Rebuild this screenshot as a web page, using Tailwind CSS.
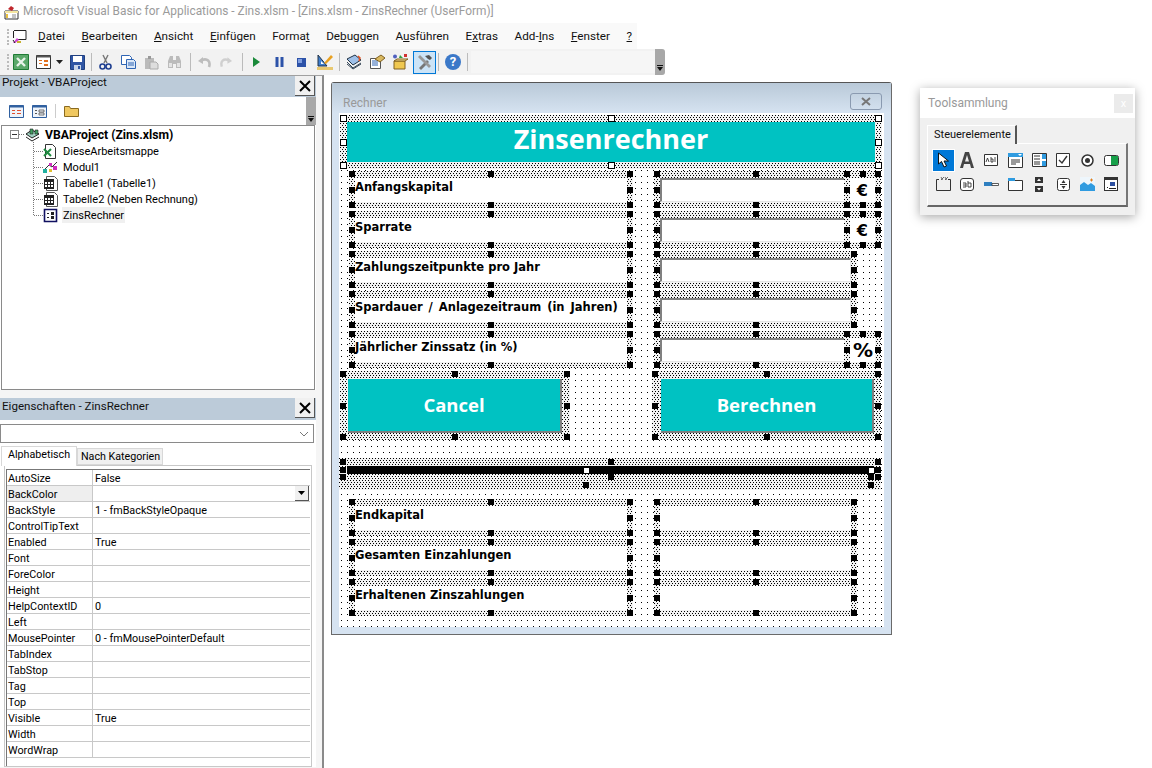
<!DOCTYPE html>
<html lang="de">
<head>
<meta charset="UTF-8">
<title>Microsoft Visual Basic for Applications - Zins.xlsm</title>
<script src="https://cdn.jsdelivr.net/npm/@tailwindcss/browser@4"></script>
</head>
<body class="bg-white overflow-hidden">
<div class="w-[1152px] h-[768px] flex flex-col overflow-hidden bg-white text-black whitespace-nowrap font-['Roboto',sans-serif]">

  <!-- title bar -->
  <div class="h-[23px] shrink-0 flex items-center pl-[4px] pt-[1px] gap-[4px] text-[11.9px] text-[#9b9b9b]">
    <svg class="w-[15px] h-[15px]" viewBox="0 0 15 15"><path d="M1 6h13v8H1z" fill="#fff" stroke="#333"/><path d="M1 6h13v2H1z" fill="#f4e5a0"/><path d="M4 4l3-3 3 2-2 3z" fill="#c0272d"/><path d="M2 9h2v4H2z" fill="#e8c040"/><path d="M8 10h4M8 12h4" stroke="#888"/></svg>
    <span>Microsoft Visual Basic for Applications - Zins.xlsm - [Zins.xlsm - ZinsRechner (UserForm)]</span>
  </div>

  <!-- menu bar -->
  <div class="h-[26px] shrink-0 w-[637px] bg-[#f9f9f9] flex items-center pl-[7px] pt-[1px] text-[11.7px] text-[#111]">
    <div class="w-[3px] h-[16px] shrink-0 border-l-2 border-dotted border-[#bbb] mr-[2px]"></div>
    <svg class="w-[15px] h-[15px] shrink-0 mr-[11px]" viewBox="0 0 15 15"><path d="M2 1.500h12v9H6" fill="#fff" stroke="#222"/><path d="M1.500 2v7" stroke="#222"/><path d="M1 14l4-5 2 2-4 3z" fill="#d040d0"/><path d="M1 11l2 3" stroke="#222"/><path d="M5 13h4" stroke="#c8b030" stroke-width="2"/></svg>
    <div class="flex gap-[16.6px]">
      <span><u>D</u>atei</span><span><u>B</u>earbeiten</span><span><u>A</u>nsicht</span><span><u>E</u>infügen</span><span>Forma<u>t</u></span><span>De<u>b</u>uggen</span><span>A<u>u</u>sführen</span><span>E<u>x</u>tras</span><span>Add-<u>I</u>ns</span><span><u>F</u>enster</span><span><u>?</u></span>
    </div>
  </div>

  <!-- standard toolbar -->
  <div class="h-[26px] shrink-0 w-[665px] bg-[#f2f2f2] flex items-center pl-[7px] rounded-r-[3px] relative">
    <div class="w-[3px] h-[16px] border-l-2 border-dotted border-[#bbb] mr-[3px]"></div>
    <svg class="w-[16px] h-[16px] mr-[7px]" viewBox="0 0 16 16"><path d="M.5.500h15v15H.5z" fill="#5aa86a" stroke="#1e7b34"/><path d="M4 4l8 8M12 4l-8 8" stroke="#e8f4ea" stroke-width="2.400"/></svg>
    <svg class="w-[15px] h-[14px]" viewBox="0 0 15 14"><path d="M.5.500h14v13H.5z" fill="#fff" stroke="#333"/><path d="M.5.500h14v2H.5z" fill="#555"/><path d="M3 5h3v1H3zM3 8h3v1H3zM8 5h4v2H8zM8 9h4v2H8z" fill="#e07020"/></svg>
    <svg class="w-[7px] h-[4px] ml-[5px] mr-[7px]" viewBox="0 0 7 4"><path d="M0 0h7L3.500 4z" fill="#222"/></svg>
    <svg class="w-[15px] h-[15px]" viewBox="0 0 15 15"><path d="M.5.500h14v14H.5z" fill="#2f55a4" stroke="#1f3f80"/><path d="M3 1h9v6H3z" fill="#fff"/><path d="M4 10h7v5H4z" fill="#c8d4e8"/><path d="M8 11h2v3H8z" fill="#2f55a4"/></svg>
    <div class="w-px h-[18px] bg-[#bbb] ml-[6px] mr-[7px]"></div>
    <svg class="w-[13px] h-[16px] mr-[9px]" viewBox="0 0 13 16"><path d="M4 1l4 8M9 1L5 9" stroke="#777" stroke-width="1.400"/><circle cx="3.500" cy="12.500" r="2.500" fill="none" stroke="#1f3f90" stroke-width="1.600"/><circle cx="9.500" cy="12.500" r="2.500" fill="none" stroke="#1f3f90" stroke-width="1.600"/></svg>
    <svg class="w-[15px] h-[14px] mr-[8px]" viewBox="0 0 15 14"><path d="M.5.500h8l2 2v7H.5z" fill="#fff" stroke="#2f65b4"/><path d="M5.500 4.500h7l2 2v7h-9z" fill="#dbe8f8" stroke="#2f65b4"/><path d="M7 8h6M7 10h6" stroke="#2f65b4"/></svg>
    <svg class="w-[15px] h-[15px] mr-[8px]" viewBox="0 0 15 15"><path d="M1 3h9v11H1z" fill="#bbb"/><path d="M4 1h3v3H4z" fill="#999"/><path d="M6 7h6l2 2v5H6z" fill="#ddd" stroke="#aaa"/></svg>
    <svg class="w-[15px] h-[14px]" viewBox="0 0 15 14"><path d="M1 6l2-5h3v4h3V1h3l2 5v7H9V9H6v4H1z" fill="#bbb"/><path d="M2 8h3v4H2zM10 8h3v4h-3z" fill="#e4e4e4"/></svg>
    <div class="w-px h-[18px] bg-[#bbb] ml-[8px] mr-[6px]"></div>
    <svg class="w-[14px] h-[14px] mr-[9px]" viewBox="0 0 14 14"><path d="M12 12c2-6-2-9-7-7" fill="none" stroke="#bdbdbd" stroke-width="2.600"/><path d="M1 6l5-4v7z" fill="#bdbdbd"/></svg>
    <svg class="w-[13px] h-[14px]" viewBox="0 0 14 14"><path d="M2 12C0 6 4 3 9 5" fill="none" stroke="#cfcfcf" stroke-width="2.600"/><path d="M13 6L8 2v7z" fill="#cfcfcf"/></svg>
    <div class="w-px h-[18px] bg-[#bbb] ml-[9px] mr-[9px]"></div>
    <svg class="w-[8px] h-[10px] mr-[15px]" viewBox="0 0 8 10"><path d="M1 0l7 5-7 5z" fill="#1a8a3a"/></svg>
    <svg class="w-[9px] h-[10px] mr-[13px]" viewBox="0 0 9 10"><path d="M.5 0h3v10h-3zM5.500 0h3v10h-3z" fill="#2c52a8"/></svg>
    <svg class="w-[9px] h-[9px] mr-[11px]" viewBox="0 0 9 9"><path d="M0 0h9v9H0z" fill="#2c52a8"/><path d="M1 1h4v4H1z" fill="#7f9ee0"/></svg>
    <svg class="w-[16px] h-[16px]" viewBox="0 0 16 16"><path d="M1 1l9 11H1z" fill="#3f7fd0" stroke="#234"/><path d="M4 7v3h3z" fill="#fff"/><path d="M7 9l7-8 2 2-7 7z" fill="#e8a020"/><path d="M0 13h16v3H0z" fill="#e8c870"/></svg>
    <div class="w-px h-[18px] bg-[#bbb] ml-[6px] mr-[6px]"></div>
    <svg class="w-[16px] h-[16px] mr-[7px]" viewBox="0 0 16 16"><path d="M1 5l8-4 6 5-8 5z" fill="#9fc0e8" stroke="#234"/><path d="M1 8l6 6 8-5M1 10l6 5 8-5" fill="none" stroke="#345"/><path d="M12 2l2 2-1 3" stroke="#e05020" stroke-width="1.500" fill="none"/></svg>
    <svg class="w-[16px] h-[16px] mr-[7px]" viewBox="0 0 16 16"><path d="M1.500 4.500h10v10h-10z" fill="#fff" stroke="#555"/><path d="M3 7h6M3 9h6M3 11h6" stroke="#2f65b4"/><path d="M6 5l6-4 4 3-5 4z" fill="#d8b860" stroke="#806020"/></svg>
    <svg class="w-[16px] h-[16px]" viewBox="0 0 16 16"><path d="M2 7h11v8H2z" fill="#f0c850" stroke="#806020"/><path d="M2 7l3-2h11l-3 2z" fill="#f8e090" stroke="#806020"/><circle cx="3" cy="2.500" r="2" fill="#5060c0"/><path d="M8 1l3 3H7z" fill="#30a040"/><path d="M12 0h3v3h-3z" fill="#d03030"/></svg>
    <div class="w-[23px] h-[23px] ml-[5px] bg-[#cce4f7] border border-[#0078d7] flex items-center justify-center">
      <svg class="w-[16px] h-[16px]" viewBox="0 0 16 16"><path d="M2 14l8-8 2 2-8 8z" fill="#777"/><path d="M3 1l11 11-2 2L1 3z" fill="#999"/><path d="M8 2l4-1 3 3-2 2-2-1z" fill="#555"/></svg>
    </div>
    <div class="w-px h-[18px] bg-[#bbb] ml-[2px] mr-[6px]"></div>
    <div class="w-[16px] h-[16px] rounded-full bg-[#3b78c8] text-white text-[13px] font-bold leading-[16px] text-center">?</div>
    <div class="w-px h-[18px] bg-[#bbb] ml-[6px] mr-[3px]"></div>
    <div class="w-[184px] h-[22px] bg-[#f6f6f6]"></div>
    <div class="w-[10px] h-[26px] bg-[#a8a8a8] rounded-r-[3px] flex items-end justify-center pb-[4px]">
      <svg class="w-[6px] h-[6px]" viewBox="0 0 6 6"><path d="M0 0h6v1H0zM0 2h6L3 6z" fill="#111"/></svg>
    </div>
  </div>

  <!-- workspace -->
  <div class="flex flex-1 min-h-0">

    <!-- docked panels -->
    <div class="w-[324px] shrink-0 border-r-2 border-[#8a8a8a] bg-[#f5f5f5] border-t border-t-[#a0a0a0] text-[11px]">
      <div class="w-[316px] flex flex-col h-[691px] bg-white">

        <div class="h-[21px] bg-[#bccbd9] flex items-start justify-between pl-[2px] pr-[1px]">
          <span class="text-[11.7px] leading-[13px] text-[#111]">Projekt - VBAProject</span>
          <div class="w-[20px] h-[20px] bg-[#f0f0f0] border-r border-b border-[#555] flex items-center justify-center">
            <svg class="w-[12px] h-[12px]" viewBox="0 0 12 12"><path d="M1 1l10 10M11 1L1 11" stroke="#000" stroke-width="2"/></svg>
          </div>
        </div>

        <div class="h-[28px] flex items-center pl-[9px] gap-[8px] relative">
          <svg class="w-[15px] h-[13px]" viewBox="0 0 15 13"><path d="M.5.500h14v12H.5z" fill="#eef3fa" stroke="#3060a0"/><path d="M.5.500h14v2H.5z" fill="#3060a0"/><path d="M3 5h3v1H3zM3 8h3v1H3zM8 5h4v1H8zM8 8h4v1H8z" fill="#e05030"/></svg>
          <svg class="w-[15px] h-[13px]" viewBox="0 0 15 13"><path d="M.5.500h14v12H.5z" fill="#eef3fa" stroke="#3060a0"/><path d="M.5.500h14v2H.5z" fill="#3060a0"/><path d="M3 5h2v1H3zM3 8h2v1H3z" fill="#555"/><path d="M7 5h5v2H7zM7 8h5v2H7z" fill="none" stroke="#555" stroke-width=".8"/></svg>
          <div class="w-px h-[14px] bg-[#ccc]"></div>
          <svg class="w-[15px] h-[12px]" viewBox="0 0 15 12"><path d="M.5 1.500h5l1 2h8v8H.5z" fill="#f0c860" stroke="#8a6a20"/></svg>
          <div class="absolute right-0 top-0 w-[10px] h-[28px] bg-[#a8a8a8] flex items-end justify-center pb-[3px]">
            <svg class="w-[6px] h-[6px]" viewBox="0 0 6 6"><path d="M0 0h6v1H0zM0 2h6L3 6z" fill="#111"/></svg>
          </div>
        </div>

        <!-- project tree -->
        <div class="h-[265px] mx-[1px] border border-[#8a8a8a] relative">
          <svg class="absolute left-0 top-0 w-[60px] h-[110px]" viewBox="0 0 60 110" shape-rendering="crispEdges">
            <path d="M8.500 4.500h8v8h-8z" fill="#fff" stroke="#888"/><path d="M10 8.500h5" stroke="#333"/>
            <path d="M17 8.500h6M31.500 16v73M32 25.500h10M32 41.500h10M32 57.500h10M32 73.500h10M32 89.500h10" stroke="#777" stroke-dasharray="1 1" fill="none"/>
          </svg>
          <div class="absolute left-[23px] top-[1px] flex flex-col leading-[19px]">
            <div class="flex items-center h-[16px] font-bold text-[12.2px] leading-[16px]"><svg class="w-[15px] h-[15px] mr-[5px]" viewBox="0 0 15 15"><path d="M1 6l6-4 7 4-7 4z" fill="#a0d0c0" stroke="#222"/><path d="M1 9l6 4 7-4" fill="none" stroke="#222"/><path d="M5 1h3v5H5zM10 2h3v4h-3z" fill="#40a060" stroke="#222" stroke-width=".6"/></svg>VBAProject (Zins.xlsm)</div>
            <div class="flex items-center h-[16px] ml-[18px]"><svg class="w-[15px] h-[15px] mr-[5px]" viewBox="0 0 15 15"><path d="M2.500.500h7l3 3v11h-10z" fill="#fff" stroke="#333"/><path d="M1 5l7 7M8 5l-7 7" stroke="#1e8b40" stroke-width="2"/></svg><span class="pt-[1px]">DieseArbeitsmappe</span></div>
            <div class="flex items-center h-[16px] ml-[18px]"><svg class="w-[15px] h-[15px] mr-[5px]" viewBox="0 0 15 15"><path d="M1 10l5-5 3 2 5-5" stroke="#333" fill="none"/><path d="M0 9h4v4H0z" fill="#20b0a0"/><path d="M6 3h3v3H6z" fill="#d030c0"/><path d="M10 6h4v4h-4z" fill="#d030c0"/><path d="M6 9h3v3H6z" fill="#e0c030"/></svg><span class="pt-[1px]">Modul1</span></div>
            <div class="flex items-center h-[16px] ml-[18px]"><svg class="w-[15px] h-[15px] mr-[5px]" viewBox="0 0 15 15"><path d="M3.500.500h8l3 3v11h-11z" fill="#fff" stroke="#555"/><path d="M1 3h10v10H1z" fill="#222"/><path d="M2 6h2v2H2zM5 6h2v2H5zM8 6h2v2H8zM2 9h2v2H2zM5 9h2v2H5zM8 9h2v2H8z" fill="#fff"/></svg><span class="pt-[1px]">Tabelle1 (Tabelle1)</span></div>
            <div class="flex items-center h-[16px] ml-[18px]"><svg class="w-[15px] h-[15px] mr-[5px]" viewBox="0 0 15 15"><path d="M3.500.500h8l3 3v11h-11z" fill="#fff" stroke="#555"/><path d="M1 3h10v10H1z" fill="#222"/><path d="M2 6h2v2H2zM5 6h2v2H5zM8 6h2v2H8zM2 9h2v2H2zM5 9h2v2H5zM8 9h2v2H8z" fill="#fff"/></svg><span class="pt-[1px]">Tabelle2 (Neben Rechnung)</span></div>
            <div class="flex items-center h-[16px] ml-[18px]"><svg class="w-[15px] h-[15px] mr-[4px]" viewBox="0 0 15 15"><path d="M1.500 1.500h12v12h-12z" fill="#fff" stroke="#101060" stroke-width="1.600"/><path d="M4 5h2v1H4zM4 9h2v1H4zM8 4h3v3H8zM8 8h3v3H8z" fill="#222"/></svg><span class="bg-[#f0f0f0] px-[1px] pt-[1px] leading-[15px]">ZinsRechner</span></div>
          </div>
        </div>

        <div class="h-[8px] bg-[#f5f5f5]"></div>

        <div class="h-[22px] bg-[#bccbd9] flex items-start justify-between pl-[2px] pr-[1px]">
          <span class="text-[11.6px] leading-[16px] text-[#111]">Eigenschaften - ZinsRechner</span>
          <div class="w-[20px] h-[20px] bg-[#f0f0f0] border-r border-b border-[#555] flex items-center justify-center">
            <svg class="w-[12px] h-[12px]" viewBox="0 0 12 12"><path d="M1 1l10 10M11 1L1 11" stroke="#000" stroke-width="2"/></svg>
          </div>
        </div>

        <div class="h-[19px] mt-[4px] w-[314px] border border-[#8a8a8a] flex items-center justify-end pr-[4px]">
          <svg class="w-[10px] h-[6px]" viewBox="0 0 10 6"><path d="M1 1l4 4 4-4" fill="none" stroke="#777"/></svg>
        </div>

        <div class="flex mt-[3px] h-[20px] pl-[1px] text-[10.7px]">
          <div class="w-[76px] h-[20px] bg-white border border-b-0 border-[#d8d8d8] pl-[6px] leading-[16px] z-10">Alphabetisch</div>
          <div class="w-[86px] h-[17px] mt-[2px] bg-[#f0f0f0] border border-[#d8d8d8] pl-[3px] leading-[16px]">Nach Kategorien</div>
        </div>

        <!-- property grid -->
        <div class="flex-1 min-h-0 ml-[4px] w-[308px] border border-[#c8c8c8] px-[1px] pt-[3px] -mt-px overflow-hidden">
          <div class="border-t border-l border-[#777] h-full">
            <div class="grid grid-cols-[86px_1fr] auto-rows-[16px] leading-[17px] text-[10.8px]">
              <div class="border-b border-r border-[#c8c8c8] pl-[1px]">AutoSize</div><div class="border-b border-[#c8c8c8] pl-[2px]">False</div>
              <div class="border-b border-r border-[#c8c8c8] pl-[1px] bg-[#eeeeee]">BackColor</div><div class="border-b border-[#c8c8c8] flex justify-end pr-[1px]"><div class="w-[14px] h-[15px] bg-[#f0f0f0] border-r border-b border-[#555] flex items-center justify-center"><svg class="w-[7px] h-[4px]" viewBox="0 0 7 4"><path d="M0 0h7L3.500 4z" fill="#000"/></svg></div></div>
              <div class="border-b border-r border-[#c8c8c8] pl-[1px]">BackStyle</div><div class="border-b border-[#c8c8c8] pl-[2px]">1 - fmBackStyleOpaque</div>
              <div class="border-b border-r border-[#c8c8c8] pl-[1px]">ControlTipText</div><div class="border-b border-[#c8c8c8]"></div>
              <div class="border-b border-r border-[#c8c8c8] pl-[1px]">Enabled</div><div class="border-b border-[#c8c8c8] pl-[2px]">True</div>
              <div class="border-b border-r border-[#c8c8c8] pl-[1px]">Font</div><div class="border-b border-[#c8c8c8]"></div>
              <div class="border-b border-r border-[#c8c8c8] pl-[1px]">ForeColor</div><div class="border-b border-[#c8c8c8]"></div>
              <div class="border-b border-r border-[#c8c8c8] pl-[1px]">Height</div><div class="border-b border-[#c8c8c8]"></div>
              <div class="border-b border-r border-[#c8c8c8] pl-[1px]">HelpContextID</div><div class="border-b border-[#c8c8c8] pl-[2px]">0</div>
              <div class="border-b border-r border-[#c8c8c8] pl-[1px]">Left</div><div class="border-b border-[#c8c8c8]"></div>
              <div class="border-b border-r border-[#c8c8c8] pl-[1px]">MousePointer</div><div class="border-b border-[#c8c8c8] pl-[2px]">0 - fmMousePointerDefault</div>
              <div class="border-b border-r border-[#c8c8c8] pl-[1px]">TabIndex</div><div class="border-b border-[#c8c8c8]"></div>
              <div class="border-b border-r border-[#c8c8c8] pl-[1px]">TabStop</div><div class="border-b border-[#c8c8c8]"></div>
              <div class="border-b border-r border-[#c8c8c8] pl-[1px]">Tag</div><div class="border-b border-[#c8c8c8]"></div>
              <div class="border-b border-r border-[#c8c8c8] pl-[1px]">Top</div><div class="border-b border-[#c8c8c8]"></div>
              <div class="border-b border-r border-[#c8c8c8] pl-[1px]">Visible</div><div class="border-b border-[#c8c8c8] pl-[2px]">True</div>
              <div class="border-b border-r border-[#c8c8c8] pl-[1px]">Width</div><div class="border-b border-[#c8c8c8]"></div>
              <div class="border-b border-r border-[#c8c8c8] pl-[1px]">WordWrap</div><div class="border-b border-[#c8c8c8]"></div>
            </div>
          </div>
        </div>
      </div>
    </div>

    <!-- designer area, windows float on it -->
    <div class="relative flex-1">

      <!-- user form window -->
      <div class="absolute left-[7px] top-[7px] w-[561px] h-[553px] border border-[#6a6a6a] border-t-[#555] rounded-t-[3px] bg-[#d6e3f1]">
        <div class="h-[30px] bg-linear-to-b from-[#b9c9d8] to-[#d6e3f1] flex items-center justify-between pl-[11px] pr-[9px] text-[12px] text-[#999]">
          <span class="mt-[9px]">Rechner</span>
          <div class="w-[32px] h-[17px] mt-[6px] rounded-[3px] border border-[#8a9ab0] flex items-center justify-center">
            <svg class="w-[10px] h-[9px]" viewBox="0 0 10 9"><path d="M1 1l8 7M9 1L1 8" stroke="#777" stroke-width="2"/></svg>
          </div>
        </div>

        <!-- client area with the design grid -->
        <div class="absolute left-[7px] top-[30px] w-[545px] h-[514px] bg-white">
          <svg class="absolute inset-0 w-full h-full" shape-rendering="crispEdges">
            <defs>
              <pattern id="dots" width="6" height="6" patternUnits="userSpaceOnUse"><rect x="2" y="3" width="1" height="1" fill="#000"/></pattern>
              <pattern id="hatch" width="3" height="4" patternUnits="userSpaceOnUse"><rect width="3" height="4" fill="#f2f2f2"/><path d="M0 0h1v1H0zM2 2h1v1H2z" fill="#000"/></pattern>
            </defs>
            <rect width="545" height="514" fill="url(#dots)"/>
          </svg>

          <!-- heading -->
          <div data-sel="white" class="absolute left-[1px] top-[2px] w-[542px] h-[54px] p-[7px]">
            <div class="h-full bg-[#00c2c2] flex items-center justify-center pb-[6px] text-white font-bold text-[27px] font-['Open_Sans',sans-serif]">Zinsenrechner</div>
          </div>

          <!-- input rows -->
          <div data-sel class="absolute left-[10px] top-[58px] w-[284px] h-[37px] pt-[7px] pb-[6px] px-[6px]"><div class="h-full bg-white font-bold text-[11.5px] leading-[18px] font-['DejaVu_Sans',sans-serif]">Anfangskapital</div></div>
          <div data-sel class="absolute left-[10px] top-[98px] w-[284px] h-[37px] pt-[7px] pb-[6px] px-[6px]"><div class="h-full bg-white font-bold text-[11.5px] leading-[18px] font-['DejaVu_Sans',sans-serif]">Sparrate</div></div>
          <div data-sel class="absolute left-[10px] top-[138px] w-[284px] h-[37px] pt-[7px] pb-[6px] px-[6px]"><div class="h-full bg-white font-bold text-[11.5px] leading-[18px] font-['DejaVu_Sans',sans-serif]">Zahlungszeitpunkte pro Jahr</div></div>
          <div data-sel class="absolute left-[10px] top-[178px] w-[284px] h-[37px] pt-[7px] pb-[6px] px-[6px]"><div class="h-full bg-white font-bold text-[11.5px] leading-[18px] font-['DejaVu_Sans',sans-serif] [word-spacing:2px]">Spardauer / Anlagezeitraum (in Jahren)</div></div>
          <div data-sel class="absolute left-[10px] top-[218px] w-[284px] h-[37px] pt-[7px] pb-[6px] px-[6px]"><div class="h-full bg-white font-bold text-[11.5px] leading-[18px] font-['DejaVu_Sans',sans-serif]">Jährlicher Zinssatz (in %)</div></div>

          <div data-sel class="absolute left-[315px] top-[58px] w-[203px] h-[37px] pt-[7px] pb-[6px] px-[6px]"><div class="h-full bg-white border-t-2 border-l-2 border-[#808080] border-b border-r border-b-[#e4e4e4] border-r-[#e4e4e4]"></div></div>
          <div data-sel class="absolute left-[315px] top-[98px] w-[203px] h-[37px] pt-[7px] pb-[6px] px-[6px]"><div class="h-full bg-white border-t-2 border-l-2 border-[#808080] border-b border-r border-b-[#e4e4e4] border-r-[#e4e4e4]"></div></div>
          <div data-sel class="absolute left-[315px] top-[138px] w-[203px] h-[37px] pt-[7px] pb-[6px] px-[6px]"><div class="h-full bg-white border-t-2 border-l-2 border-[#808080] border-b border-r border-b-[#e4e4e4] border-r-[#e4e4e4]"></div></div>
          <div data-sel class="absolute left-[315px] top-[178px] w-[203px] h-[37px] pt-[7px] pb-[6px] px-[6px]"><div class="h-full bg-white border-t-2 border-l-2 border-[#808080] border-b border-r border-b-[#e4e4e4] border-r-[#e4e4e4]"></div></div>
          <div data-sel class="absolute left-[315px] top-[218px] w-[203px] h-[37px] pt-[7px] pb-[6px] px-[6px]"><div class="h-full bg-white border-t-2 border-l-2 border-[#808080] border-b border-r border-b-[#e4e4e4] border-r-[#e4e4e4]"></div></div>

          <div data-sel class="absolute left-[505px] top-[58px] w-[37px] h-[37px] pt-[7px] pb-[6px] px-[6px]"><div class="h-full bg-white font-bold text-[16px] leading-[26px] text-right pr-[7px] font-['DejaVu_Sans',sans-serif]">€</div></div>
          <div data-sel class="absolute left-[505px] top-[98px] w-[37px] h-[37px] pt-[7px] pb-[6px] px-[6px]"><div class="h-full bg-white font-bold text-[16px] leading-[26px] text-right pr-[7px] font-['DejaVu_Sans',sans-serif]">€</div></div>
          <div data-sel class="absolute left-[505px] top-[218px] w-[37px] h-[37px] pt-[7px] pb-[6px] px-[6px]"><div class="h-full bg-white font-bold text-[20px] leading-[24px] text-right pr-[2px] font-['DejaVu_Sans',sans-serif]">%</div></div>

          <!-- buttons -->
          <div data-sel class="absolute left-[1px] top-[258px] w-[230px] h-[69px] pt-[8px] pb-[7px] pl-[8px] pr-[8px]"><div class="h-full bg-[#00c2c2] border-r-2 border-b-2 border-[#808080] flex items-center justify-center text-white font-bold text-[18.5px] font-['Open_Sans',sans-serif]">Cancel</div></div>
          <div data-sel class="absolute left-[313px] top-[258px] w-[229px] h-[69px] pt-[8px] pb-[7px] pl-[9px] pr-[7px]"><div class="h-full bg-[#00c2c2] border-r-2 border-b-2 border-[#808080] flex items-center justify-center text-white font-bold text-[18.5px] font-['Open_Sans',sans-serif]">Berechnen</div></div>

          <!-- divider line, its handles are drawn below -->
          <div data-sel="none" class="absolute left-0 top-[345px] w-[542px] h-[32px] pt-[8px] pl-[8px] pr-[7px]"><div class="h-[8px] bg-black"></div></div>
          <svg class="absolute left-0 top-[340px] w-[545px] h-[40px]" viewBox="0 0 545 40" shape-rendering="crispEdges">
            <path d="M1 6h6v6H1zM1 14h6v6H1zM1 21h6v6H1zM269 6h6v6h-6zM269 21h6v6h-6zM244 29h6v6h-6zM529 21h6v6h-6zM529 29h6v6h-6zM536 6h6v6h-6zM536 14h6v6h-6zM536 21h6v6h-6z" fill="#000"/>
            <path d="M244.500 14.500h6v6h-6zM529.500 14.500h6v6h-6z" fill="#fff" stroke="#000"/>
          </svg>

          <!-- result rows -->
          <div data-sel class="absolute left-[10px] top-[386px] w-[284px] h-[37px] pt-[7px] pb-[6px] px-[6px]"><div class="h-full bg-white font-bold text-[11.5px] leading-[18px] font-['DejaVu_Sans',sans-serif]">Endkapital</div></div>
          <div data-sel class="absolute left-[10px] top-[426px] w-[284px] h-[37px] pt-[7px] pb-[6px] px-[6px]"><div class="h-full bg-white font-bold text-[11.5px] leading-[18px] font-['DejaVu_Sans',sans-serif]">Gesamten Einzahlungen</div></div>
          <div data-sel class="absolute left-[10px] top-[466px] w-[284px] h-[37px] pt-[7px] pb-[6px] px-[6px]"><div class="h-full bg-white font-bold text-[11.5px] leading-[18px] font-['DejaVu_Sans',sans-serif]">Erhaltenen Zinszahlungen</div></div>
          <div data-sel class="absolute left-[315px] top-[386px] w-[203px] h-[37px] pt-[7px] pb-[6px] px-[6px]"><div class="h-full bg-white"></div></div>
          <div data-sel class="absolute left-[315px] top-[426px] w-[203px] h-[37px] pt-[7px] pb-[6px] px-[6px]"><div class="h-full bg-white"></div></div>
          <div data-sel class="absolute left-[315px] top-[466px] w-[203px] h-[37px] pt-[7px] pb-[6px] px-[6px]"><div class="h-full bg-white"></div></div>
        </div>
      </div>

      <!-- toolbox -->
      <div class="absolute left-[596px] top-[13px] w-[215px] h-[127px] bg-[#f0f0f0] shadow-[0_2px_10px_rgba(0,0,0,0.35)] flex flex-col">
        <div class="h-[30px] bg-white flex items-center justify-between pl-[8px] pr-[2px] text-[12px] text-[#999] shrink-0">
          <span>Toolsammlung</span>
          <div class="w-[19px] h-[19px] bg-[#ebebeb] flex items-center justify-center text-white text-[11px] leading-none">x</div>
        </div>
        <div class="pl-[7px] pt-[7px]">
          <div class="w-[90px] h-[19px] bg-[#f0f0f0] border-t border-l border-white border-r-2 border-r-[#555] pl-[6px] text-[11px] leading-[18px] text-[#111] relative z-10">Steuerelemente</div>
          <div class="w-[201px] h-[64px] border-t border-l border-white border-r-2 border-b-2 border-r-[#777] border-b-[#666] -mt-px">
            <div class="grid grid-cols-[repeat(8,24px)] auto-rows-[24px] pt-[4px] pl-[3px] items-center justify-items-center">
              <div class="w-[23px] h-[23px] bg-[#0078d7] border border-white flex items-center justify-center"><svg class="w-[13px] h-[16px]" viewBox="0 0 13 16"><path d="M1.500 1l0 11 3-2.500L7 15l2.500-1-2.500-5h4.500z" fill="#fff" stroke="#111"/></svg></div>
              <svg class="w-[14px] h-[16px]" viewBox="0 0 14 16"><path d="M5 0h4l5 16h-3l-1-4H4l-1 4H0zM5 9.500h4L7 3z" fill="#444" fill-rule="evenodd"/></svg>
              <svg class="w-[14px] h-[12px]" viewBox="0 0 14 12"><path d="M.5.500h13v11H.5z" fill="#fff" stroke="#333"/><path d="M2 8l1.500-4L5 8M7 3v5h2V5H7M11 3v5" fill="none" stroke="#333" stroke-width=".9"/></svg>
              <svg class="w-[15px] h-[15px]" viewBox="0 0 15 15"><path d="M.5.500h14v14H.5z" fill="#fff" stroke="#333"/><path d="M0 0h15v4H0z" fill="#2f9be0"/><path d="M10 1h4l-2 2z" fill="#fff"/><path d="M3 7h9M3 9h9M3 11h5" stroke="#333"/></svg>
              <svg class="w-[15px] h-[14px]" viewBox="0 0 15 14"><path d="M.5.500h14v13H.5z" fill="#fff" stroke="#333"/><path d="M2 3h6M2 6h6M2 9h6M2 11h6" stroke="#333"/><path d="M10 1h4v5h-4z" fill="#2f9be0"/><path d="M10 8h4v5h-4z" fill="#2f9be0"/></svg>
              <svg class="w-[14px] h-[14px]" viewBox="0 0 14 14"><path d="M.5.500h13v13H.5z" fill="#fff" stroke="#333"/><path d="M3 7l3 3 5-7" fill="none" stroke="#333" stroke-width="1.400"/></svg>
              <svg class="w-[13px] h-[13px]" viewBox="0 0 13 13"><circle cx="6.500" cy="6.500" r="5.500" fill="#fff" stroke="#333" stroke-width="1.500"/><circle cx="6.500" cy="6.500" r="2.500" fill="#333"/></svg>
              <svg class="w-[15px] h-[11px]" viewBox="0 0 15 11"><rect x=".5" y=".5" width="14" height="10" rx="2" fill="#fff" stroke="#333"/><path d="M7 1h7v9H7z" fill="#17a04a"/></svg>
              <svg class="w-[15px] h-[14px]" viewBox="0 0 15 14"><path d="M3 2.500H.5v11h14v-11H12" fill="none" stroke="#333"/><path d="M5 0l1.500 3M8 0L5 3M9 0l1.500 3M12 0L9 3" stroke="#333" stroke-width=".7"/></svg>
              <svg class="w-[14px] h-[13px]" viewBox="0 0 14 13"><rect x=".5" y=".5" width="13" height="12" rx="2.500" fill="#fff" stroke="#333"/><path d="M3 5h3v4H3M3 7h3M8 3v6h3V5H8" fill="none" stroke="#333" stroke-width=".9"/></svg>
              <svg class="w-[15px] h-[6px]" viewBox="0 0 15 6"><path d="M0 1h8v4H0z" fill="#2f7fc0"/><path d="M8 2.500h6.500v2H8z" fill="#fff" stroke="#333" stroke-width=".8"/></svg>
              <svg class="w-[15px] h-[13px]" viewBox="0 0 15 13"><path d="M.5 2.500h14v10H.5z" fill="#fff" stroke="#333"/><path d="M0 0h7v3H0z" fill="#2f9be0"/></svg>
              <svg class="w-[8px] h-[15px]" viewBox="0 0 8 15"><path d="M0 0h8v6H0zM0 9h8v6H0z" fill="#333"/><path d="M4 1.500L6 4H2zM4 13.500L6 11H2z" fill="#fff"/></svg>
              <svg class="w-[13px] h-[13px]" viewBox="0 0 13 13"><rect x=".5" y=".5" width="12" height="12" rx="2" fill="#fff" stroke="#333"/><path d="M3 6.500h7" stroke="#333"/><path d="M6.500 2L8.500 5h-4zM6.500 11L8.500 8h-4z" fill="#333"/></svg>
              <svg class="w-[15px] h-[14px]" viewBox="0 0 15 14"><path d="M0 0h15v14H0z" fill="#eef6fc"/><path d="M0 8l4-3 4 3 3-2 4 3v5H0z" fill="#2f9be0"/><path d="M10 3h3M11.500 1.500v3" stroke="#e08020"/></svg>
              <svg class="w-[14px] h-[14px]" viewBox="0 0 14 14"><path d="M0 0h14v14H0z" fill="#333"/><path d="M1 3h12v10H1z" fill="#fff"/><path d="M6 5h5v4H6z" fill="#2c4fa0"/><path d="M3 10h1v1H3zM5 11h7v1H5z" fill="#222"/></svg>
            </div>
          </div>
        </div>
      </div>
    </div>
  </div>
</div>

<script>
  // selection frame and resize handles of the selected controls
  var spots = [
    'left-0 top-0', 'left-1/2 -ml-[3px] top-0', 'right-0 top-0',
    'left-0 top-1/2 -mt-[3px]', 'right-0 top-1/2 -mt-[3px]',
    'left-0 bottom-0', 'left-1/2 -ml-[3px] bottom-0', 'right-0 bottom-0'
  ];
  document.querySelectorAll('[data-sel]').forEach(function (box) {
    box.firstElementChild.classList.add('relative');
    box.insertAdjacentHTML('afterbegin', '<svg class="absolute inset-0 w-full h-full" shape-rendering="crispEdges"><rect width="100%" height="100%" fill="url(#hatch)"/></svg>');
    if (box.dataset.sel === 'none') return;
    spots.forEach(function (spot) {
      var h = document.createElement('div');
      h.className = box.dataset.sel === 'white'
        ? 'absolute w-[7px] h-[7px] bg-white border border-black ' + spot
        : 'absolute w-[6px] h-[6px] bg-black ' + spot;
      box.appendChild(h);
    });
  });
</script>
</body>
</html>
